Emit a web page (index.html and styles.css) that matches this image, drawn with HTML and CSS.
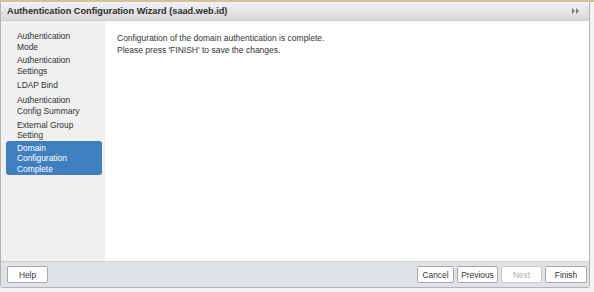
FILE: index.html
```html
<!DOCTYPE html>
<html>
<head>
<meta charset="utf-8">
<link rel="stylesheet" href="styles.css">
</head>
<body>
<div class="topstrip"></div>
<div class="window">
  <div class="titlebar">
    <span class="title">Authentication Configuration Wizard (saad.web.id)</span>
    <svg class="collapse" width="8" height="6" viewBox="0 0 8 6"><path d="M0 0 L3 3 L0 6 Z M4 0 L7 3 L4 6 Z" fill="#7a7a7a"/></svg>
  </div>
  <div class="body">
    <ul class="nav">
      <li class="item">Authentication<br>Mode</li>
      <li class="item">Authentication<br>Settings</li>
      <li class="item single">LDAP Bind</li>
      <li class="item">Authentication<br>Config Summary</li>
      <li class="item">External Group<br>Setting</li>
      <li class="item selected">Domain<br>Configuration<br>Complete</li>
    </ul>
    <div class="content">
      <p>Configuration of the domain authentication is complete.</p>
      <p>Please press 'FINISH' to save the changes.</p>
    </div>
  </div>
  <div class="footer">
    <button class="btn w-help">Help</button>
    <div class="spacer"></div>
    <button class="btn w-cancel">Cancel</button>
    <button class="btn w-prev">Previous</button>
    <button class="btn w-next" disabled>Next</button>
    <button class="btn w-finish">Finish</button>
  </div>
</div>
</body>
</html>
```

FILE: styles.css
```css
html, body {
  margin: 0;
  padding: 0;
}
body {
  width: 594px;
  height: 292px;
  background: #f3f3f1;
  font-family: "Liberation Sans", Arial, sans-serif;
  font-size: 8.4px;
  color: #333;
  overflow: hidden;
}
.topstrip {
  height: 2px;
  background: #cdc59c;
}
.window {
  width: 588px;
  height: 285px;
  border: 1px solid #b4b4b4;
  border-top: none;
  border-radius: 0 0 3px 3px;
  background: #fff;
  display: flex;
  flex-direction: column;
  box-sizing: content-box;
}
.titlebar {
  height: 19px;
  flex: none;
  background: linear-gradient(#f3f3f3, #d7d7d7);
  border-bottom: 1px solid #cfcfcf;
  display: flex;
  align-items: center;
  padding: 0 9px 0 6px;
  box-sizing: border-box;
}
.title {
  font-weight: bold;
  font-size: 9.2px;
  color: #2e2e2e;
  flex: 1;
}
.collapse {
  display: block;
}
.body {
  flex: 1;
  display: flex;
  min-height: 0;
}
.nav {
  list-style: none;
  margin: 0;
  padding: 8.5px 3px 0 5px;
  width: 104px;
  box-sizing: border-box;
  background: #f0f0f0;
  flex: none;
}
.item {
  line-height: 10.5px;
  padding: 1.6px 0 1.6px 11px;
  border-radius: 3px;
}
.item.single {
  padding-top: 2.4px;
  padding-bottom: 3px;
}
.item.selected {
  background: #3f7fbf;
  color: #fff;
  margin-top: -1px;
  padding-top: 1.8px;
  padding-bottom: 0.6px;
}
.content {
  flex: 1;
  padding: 10.5px 12px;
  font-size: 8.5px;
}
.content p {
  margin: 0;
  line-height: 12px;
}
.footer {
  height: 26px;
  flex: none;
  background: #dfe2e7;
  border-top: 1px solid #cdd0d5;
  display: flex;
  align-items: center;
  gap: 3px;
  padding: 0 2px 0 6px;
  box-sizing: border-box;
}
.spacer {
  flex: 1;
}
.btn {
  height: 17px;
  padding: 0;
  font-family: "Liberation Sans", Arial, sans-serif;
  font-size: 8.4px;
  color: #333;
  background: #fff;
  border: 1px solid #a8a8a8;
  border-radius: 2px;
}
.btn:disabled {
  color: #b0b0b0;
  border-color: #c8c8c8;
}
.w-help { width: 41px; }
.w-cancel { width: 37px; }
.w-prev { width: 41px; }
.w-next { width: 41px; }
.w-finish { width: 42px; }
```
